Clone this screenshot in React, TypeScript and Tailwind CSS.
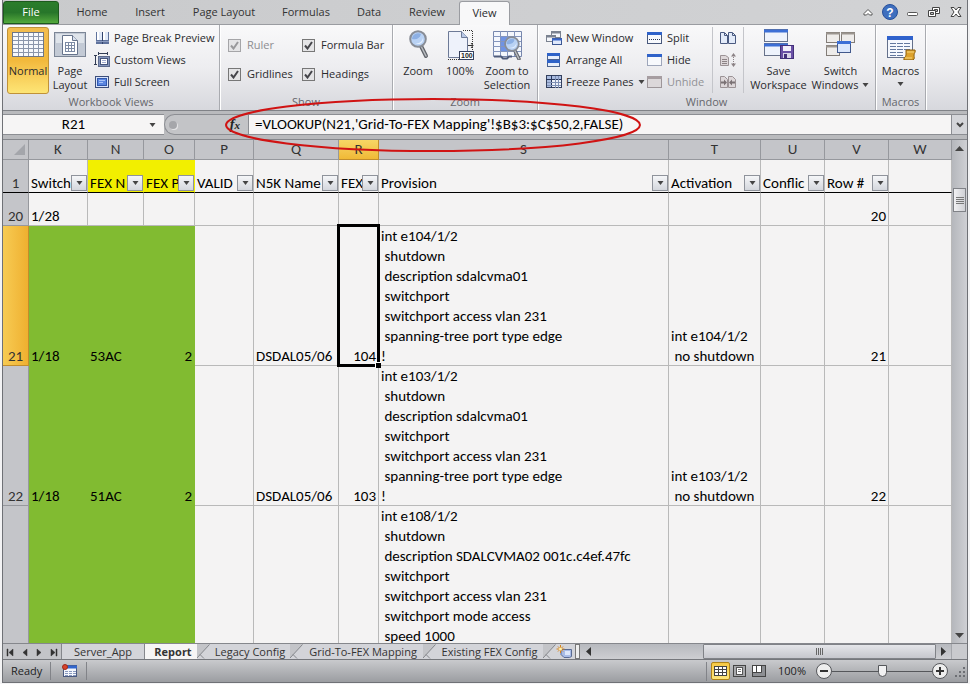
import React from 'react';
import { useState } from 'react';

const ribbonTabs = [
  { name: 'Home', width: 'w-[58px]' },
  { name: 'Insert', width: 'w-[58px]' },
  { name: 'Page Layout', width: 'w-[90px]' },
  { name: 'Formulas', width: 'w-[74px]' },
  { name: 'Data', width: 'w-[52px]' },
  { name: 'Review', width: 'w-[64px]' },
];

const columns = [
  { name: 'K', width: 'w-[59px]', title: 'Switch', filter: true },
  { name: 'N', width: 'w-[56px]', title: 'FEX N', filter: true },
  { name: 'O', width: 'w-[51px]', title: 'FEX P', filter: true },
  { name: 'P', width: 'w-[59px]', title: 'VALID', filter: true },
  { name: 'Q', width: 'w-[85px]', title: 'N5K Name', filter: true },
  { name: 'R', width: 'w-[40px]', title: 'FEX', filter: true },
  { name: 'S', width: 'w-[290px]', title: 'Provision', filter: true },
  { name: 'T', width: 'w-[92px]', title: 'Activation', filter: true },
  { name: 'U', width: 'w-[64px]', title: 'Conflic', filter: true },
  { name: 'V', width: 'w-[64px]', title: 'Row #', filter: true },
  { name: 'W', width: '', title: '', filter: false },
];

const rows: { id: number; height: string; cells: Record<string, string> }[] = [
  { id: 20, height: 'h-[33px]', cells: { K: '1/28', V: '20' } },
  {
    id: 21,
    height: 'h-[140px]',
    cells: {
      K: '1/18', N: '53AC', O: '2', Q: 'DSDAL05/06', R: '104', V: '21',
      S: 'int e104/1/2\n shutdown\n description sdalcvma01\n switchport\n switchport access vlan 231\n spanning-tree port type edge\n!',
      T: 'int e104/1/2\n no shutdown',
    },
  },
  {
    id: 22,
    height: 'h-[140px]',
    cells: {
      K: '1/18', N: '51AC', O: '2', Q: 'DSDAL05/06', R: '103', V: '22',
      S: 'int e103/1/2\n shutdown\n description sdalcvma01\n switchport\n switchport access vlan 231\n spanning-tree port type edge\n!',
      T: 'int e103/1/2\n no shutdown',
    },
  },
  {
    id: 23,
    height: 'h-[180px]',
    cells: {
      S: 'int e108/1/2\n shutdown\n description SDALCVMA02 001c.c4ef.47fc\n switchport\n switchport access vlan 231\n switchport mode access\n speed 1000',
    },
  },
];

function Caret() {
  return (
    <svg width="7" height="4" viewBox="0 0 7 4" className="shrink-0">
      <path d="M0.5 0h6L3.5 4z" fill="#444" />
    </svg>
  );
}

function NormalIcon() {
  return (
    <svg width="32" height="32" viewBox="0 0 32 32">
      <rect x="0.5" y="4.5" width="31" height="24" fill="#f7f9fc" stroke="#6d7687" />
      <path d="M1 8.500h30M1 12.500h30M1 16.500h30M1 20.500h30M1 24.500h30M6.500 5v23M11.500 5v23M16.500 5v23M21.500 5v23M26.500 5v23" stroke="#8b96ab" />
    </svg>
  );
}

function PageLayoutIcon() {
  return (
    <svg width="32" height="32" viewBox="0 0 32 32">
      <rect x="0.5" y="4.5" width="31" height="24" fill="#c3cad5" stroke="#7c8696" />
      <path d="M2 6h28v9H2z" fill="#dfe4ea" />
      <path d="M8.500 7.500h10l5 5v14h-15z" fill="#fff" stroke="#67748c" />
      <path d="M18.500 7.500v5h5" fill="#dbe2ee" stroke="#67748c" />
      <path d="M11 14.500h10M11 17.500h10M11 20.500h10M11 23.500h10M11.500 14v10M14.500 14v10M17.500 14v10M20.500 14v10" stroke="#7d8ba4" />
    </svg>
  );
}

function PageBreakIcon() {
  return (
    <svg width="16" height="16" viewBox="0 0 16 16">
      <path d="M2 2h13v12H2z" fill="#5f729c" />
      <path d="M3 2h5v8H3zM9 2h5v8H9z" fill="#dfe8f8" />
      <path d="M3 2h2v8H3zM9 2h2v8H9z" fill="#fff" />
      <path d="M8.500 2v12" stroke="#32436d" />
      <path d="M2 11h13v1H2z" fill="#8c9cc0" />
    </svg>
  );
}

function CustomViewsIcon() {
  return (
    <svg width="16" height="16" viewBox="0 0 16 16">
      <path d="M0 3.500h3M1.500 3.500v9M0 12.500h3M4 1.500h10M4.500 0v3M13.500 0v3" stroke="#333d55" fill="none" />
      <rect x="4.500" y="4.500" width="11" height="10" fill="#8494bb" stroke="#5c6a8c" />
      <rect x="6.500" y="6.500" width="7" height="6" fill="#fff" stroke="#45547a" />
      <path d="M8 8.500h4M8 10.500h4" stroke="#a3add0" />
    </svg>
  );
}

function FullScreenIcon() {
  return (
    <svg width="16" height="16" viewBox="0 0 16 16">
      <rect x="1.500" y="2.500" width="13" height="11" fill="#d9e4fb" stroke="#3d4e7a" />
      <rect x="3.500" y="4.500" width="9" height="7" fill="#5b86e0" stroke="#3158ae" />
      <path d="M5 6.500h6M5 8.500h4" stroke="#a9c3f8" />
    </svg>
  );
}

function Lens({ x, y }: { x: number; y: number }) {
  return (
    <g transform={`translate(${x} ${y})`}>
      <path d="M12 16l5 10" stroke="#63666c" strokeWidth="4" strokeLinecap="round" />
      <path d="M12 16l5 10" stroke="#b9bcc2" strokeWidth="1.500" strokeLinecap="round" />
      <circle cx="9" cy="9" r="7.800" fill="#b9d2f4" stroke="#888d96" strokeWidth="2" />
      <path d="M3 9a6 6 0 0 1 9-5c-1 4-4 6-9 5z" fill="#8db0e4" />
      <path d="M6 13c4 1 7-1 8-5 1 4-3 8-8 5z" fill="#e5f0ff" />
    </g>
  );
}

function ZoomIcon() {
  return (
    <svg width="32" height="32" viewBox="0 0 32 32">
      <Lens x={7} y={2} />
    </svg>
  );
}

function HundredIcon() {
  return (
    <svg width="32" height="32" viewBox="0 0 32 32">
      <path d="M4.500 3.500h13l6 6v20h-19z" fill="#eef2fb" stroke="#6d7a97" />
      <path d="M17.500 3.500v6h6" fill="#b9c8e6" stroke="#6d7a97" />
      <path d="M19 2.500h9.500V22M4 31.500h12" stroke="#333" strokeDasharray="1 1" fill="none" />
      <path d="M24 17.500h5M27 15l2 2.500-2 2.500" stroke="#333" fill="none" />
      <rect x="15.500" y="23.500" width="14" height="8" fill="#fff" stroke="#36415e" />
      <text x="17" y="30" fontSize="7" fontWeight="bold" fontFamily="Liberation Sans, sans-serif" fill="#222">100</text>
    </svg>
  );
}

function ZoomSelectionIcon() {
  return (
    <svg width="32" height="32" viewBox="0 0 32 32">
      <path d="M2.500 3.500h28v25h-28z" fill="#f4f7fd" stroke="#7787ad" />
      <path d="M9 8h14v15H9z" fill="#6f93e4" />
      <path d="M2 8.500h28M2 13.500h28M2 18.500h28M2 23.500h28M9.500 3v25M16.500 3v25M23.500 3v25" stroke="#8495bd" />
      <path d="M3 28.500h7l2 2h4l2-2h3" stroke="#4e5b7b" fill="none" strokeWidth="2" />
      <g transform="translate(13 8) scale(.88)"><Lens x={0} y={0} /></g>
    </svg>
  );
}

function NewWindowIcon() {
  return (
    <svg width="16" height="16" viewBox="0 0 16 16">
      <rect x="5.500" y="1.500" width="9" height="6" fill="#f4f6fa" stroke="#7b8290" />
      <path d="M5 2.500h10" stroke="#7b8290" strokeWidth="2" />
      <rect x="0.500" y="5.500" width="9" height="6" fill="#f4f6fa" stroke="#7b8290" />
      <path d="M0 6.500h10" stroke="#7b8290" strokeWidth="2" />
      <rect x="6.500" y="8.500" width="9" height="6" fill="#dfe9fc" stroke="#3c5792" />
      <path d="M6 9.500h10" stroke="#3a66c9" strokeWidth="2" />
    </svg>
  );
}

function ArrangeIcon() {
  return (
    <svg width="16" height="16" viewBox="0 0 16 16">
      <rect x="1.500" y="1.500" width="12" height="6" fill="#e6eefc" stroke="#4b628f" />
      <path d="M1 2.500h13" stroke="#2e62c8" strokeWidth="3" />
      <rect x="1.500" y="8.500" width="12" height="6" fill="#e6eefc" stroke="#4b628f" />
      <path d="M1 9.500h13" stroke="#2e62c8" strokeWidth="3" />
    </svg>
  );
}

function FreezeIcon() {
  return (
    <svg width="16" height="16" viewBox="0 0 16 16">
      <rect x="0.500" y="1.500" width="15" height="12" fill="#eef2fa" stroke="#34415f" />
      <path d="M1 2h14v3H1zM1 2h4v11H1z" fill="#a9bbdf" />
      <path d="M0 5.500h16M5.500 1v13" stroke="#28365a" />
      <path d="M1 8.500h14M1 11.500h14M9.500 2v12M12.500 2v12" stroke="#7f90b5" />
    </svg>
  );
}

function SplitIcon({ mode }: { mode: 'split' | 'hide' | 'unhide' }) {
  const gray = mode === 'unhide';
  return (
    <svg width="16" height="16" viewBox="0 0 16 16">
      <rect
        x="0.500"
        y="2.500"
        width="14"
        height="11"
        fill={gray ? '#dcd8da' : '#f7f9fd'}
        stroke={gray ? '#9d9699' : '#48587c'}
        strokeDasharray={mode === 'hide' ? '1 1' : undefined}
      />
      <path d="M0 3.500h15" stroke={gray ? '#a69da1' : '#2f62c9'} strokeWidth="3" />
      {mode === 'split' && <path d="M2 9.500h12" stroke="#2b3755" strokeDasharray="1 1" />}
    </svg>
  );
}

function SideBySideIcon() {
  return (
    <svg width="16" height="16" viewBox="0 0 16 16">
      <path d="M0.500 2.500h4l3 3v8h-7z" fill="#e3ebf9" stroke="#4a5a80" />
      <path d="M8.500 2.500h4l3 3v8h-7z" fill="#e3ebf9" stroke="#4a5a80" />
      <path d="M4.500 3v2.500h3M12.500 3v2.500h3" stroke="#4a5a80" fill="none" />
    </svg>
  );
}

function SyncScrollIcon() {
  return (
    <svg width="16" height="16" viewBox="0 0 16 16">
      <path d="M0.500 3.500h5l3 2v8h-8z" fill="#ddd7d9" stroke="#9b9295" />
      <path d="M2 7.500h5M2 9.500h5M2 11.500h5" stroke="#8b8285" />
      <path d="M13.500 3v10" stroke="#8b8285" strokeDasharray="1 1" />
      <path d="M11 4.500L13.500 1 16 4.500zM11 11.500l2.500 3.500 2.500-3.500z" fill="#8b8285" />
    </svg>
  );
}

function ResetIcon() {
  return (
    <svg width="16" height="16" viewBox="0 0 16 16">
      <path d="M0.500 2.500h4l3 3v8h-7zM8.500 2.500h4l3 3v8h-7z" fill="#ddd7d9" stroke="#9b9295" />
      <path d="M1 8.500h3M15 8.500h-3" stroke="#7b7275" strokeWidth="2" />
      <path d="M4 5.500l3 3-3 3zM12 5.500l-3 3 3 3z" fill="#7b7275" />
    </svg>
  );
}

function SaveWorkspaceIcon() {
  return (
    <svg width="32" height="32" viewBox="0 0 32 32">
      <rect x="1.500" y="1.500" width="23" height="12" fill="#eef3fc" stroke="#67728a" />
      <path d="M1 3h24" stroke="#3c6fd6" strokeWidth="3" />
      <rect x="1.500" y="15.500" width="23" height="12" fill="#eef3fc" stroke="#67728a" />
      <path d="M1 17h24" stroke="#3c6fd6" strokeWidth="3" />
      <rect x="17.500" y="17.500" width="13" height="13" fill="#6a50a6" stroke="#43307a" />
      <path d="M20 18h8v5h-8z" fill="#f3effb" />
      <path d="M20 25h8v5h-8z" fill="#d9d3e8" />
      <path d="M21 26h3v4h-3z" fill="#43307a" />
    </svg>
  );
}

function SwitchWindowsIcon() {
  return (
    <svg width="32" height="32" viewBox="0 0 32 32">
      <g fill="#eeecea" stroke="#827c77">
        <rect x="1.500" y="4.500" width="13" height="10" />
        <rect x="16.500" y="4.500" width="13" height="10" />
        <rect x="1.500" y="17.500" width="13" height="10" />
      </g>
      <path d="M1 5.500h14M16 5.500h14M1 18.500h14" stroke="#9b958f" strokeWidth="2" />
      <rect x="12.500" y="13.500" width="13" height="11" fill="#dbe7fc" stroke="#42598c" />
      <path d="M12 14.500h14" stroke="#3c6fd6" strokeWidth="3" />
    </svg>
  );
}

function MacrosIcon() {
  return (
    <svg width="32" height="32" viewBox="0 0 32 32">
      <rect x="2.500" y="8.500" width="25" height="21" fill="#f5f8fe" stroke="#64708a" />
      <path d="M2 10h26" stroke="#2f62cc" strokeWidth="4" />
      <path d="M5 15.500h20M5 18.500h20M5 21.500h20M5 24.500h14M5 27.500h14" stroke="#63789f" strokeDasharray="6 1" />
      <path d="M21 22h9c1 2-1 3-1 5s1 4-1 5h-9c-1-2 2-3 2-5z" fill="#dca12c" stroke="#8d6110" />
      <path d="M22 24h7M20 30h7" stroke="#f6d67e" />
    </svg>
  );
}

function SmallButton({ icon, label, caret, disabled }: { icon: React.ReactNode; label: string; caret?: boolean; disabled?: boolean }) {
  return (
    <button disabled={disabled} className="flex h-[22px] items-center gap-1 whitespace-nowrap disabled:text-[#929296]">
      {icon}
      <span>{label}</span>
      {caret && <Caret />}
    </button>
  );
}

function BigButton({ icon, lines, width, active, caret }: { icon: React.ReactNode; lines: string[]; width: string; active?: boolean; caret?: boolean }) {
  return (
    <button
      className={`flex h-[67px] shrink-0 flex-col items-center whitespace-nowrap rounded-[3px] border leading-[14px] ${width} ${
        active ? 'border-[#c09238] bg-linear-to-b from-[#f3bd4f] via-[#f2b93c] to-[#fde575]' : 'border-transparent'
      }`}
    >
      <span className="mb-1 block">{icon}</span>
      {lines.map((line, i) => (
        <span key={line} className="flex h-[14px] items-center gap-1">
          {line}
          {caret && i === 1 && <Caret />}
        </span>
      ))}
      {caret && lines.length === 1 && <span className="pt-1"><Caret /></span>}
    </button>
  );
}

function Group({ label, width, children }: { label: string; width: string; children: React.ReactNode }) {
  return (
    <section className={`flex shrink-0 flex-col border-r border-[#a9abb0] shadow-[1px_0_0_#fff] ${width}`}>
      <div className="flex flex-1 pt-[2px]">{children}</div>
      <h2 className="h-4 text-center leading-4 text-[#66676c]">{label}</h2>
    </section>
  );
}

function Check({ label, disabled }: { label: string; disabled?: boolean }) {
  return (
    <label className={`flex h-[29px] items-center gap-[6px] whitespace-nowrap ${disabled ? 'text-[#8d8d91]' : ''}`}>
      <span className="grid size-[13px] place-items-center">
        <input
          type="checkbox"
          defaultChecked
          disabled={disabled}
          className="peer col-start-1 row-start-1 size-[13px] appearance-none border border-[#777] bg-[#e4e4e6] disabled:border-[#a5a5a8]"
        />
        <svg width="9" height="9" viewBox="0 0 9 9" className="pointer-events-none invisible col-start-1 row-start-1 peer-checked:visible">
          <path d="M1 4.500l2.500 3L8 1" fill="none" stroke={disabled ? '#98989b' : '#45454a'} strokeWidth="2" />
        </svg>
      </span>
      {label}
    </label>
  );
}

function TitleTabs() {
  return (
    <nav className="flex h-6 shrink-0 items-stretch bg-linear-to-r from-[#c9cacc] to-[#d2d3d5]">
      <button className="mt-px w-14 rounded-t-[3px] border border-[#1d5a1d] bg-linear-to-b from-[#2b7d2b] via-[#27762a] to-[#53a93c] text-white">File</button>
      <div className="flex pt-px pl-1">
        {ribbonTabs.map((tab) => (
          <button key={tab.name} className={`whitespace-nowrap text-[#333] ${tab.width}`}>{tab.name}</button>
        ))}
      </div>
      <button className="z-10 mt-px -mb-px w-[51px] rounded-t-[3px] border border-b-0 border-[#9a9ca1] bg-[#f8f8f9]">View</button>
      <div className="ml-auto flex items-center gap-[6px] pr-[3px]">
        <button aria-label="Minimize the Ribbon">
          <svg width="16" height="16" viewBox="0 0 16 16"><path d="M4 9.500L8 5.500l4 4v1.500H9.500L8 9.500 6.500 11H4z" fill="#fff" stroke="#555" /></svg>
        </button>
        <button aria-label="Help">
          <svg width="16" height="16" viewBox="0 0 16 16">
            <circle cx="8" cy="8" r="7.500" fill="#3f6fbe" stroke="#27509b" />
            <text x="8" y="12.500" textAnchor="middle" fontSize="12" fontWeight="bold" fontFamily="Liberation Sans, sans-serif" fill="#fff">?</text>
          </svg>
        </button>
        <button aria-label="Minimize">
          <svg width="16" height="16" viewBox="0 0 16 16"><rect x="3.500" y="8.500" width="10" height="3" rx="1" fill="#fff" stroke="#555" /></svg>
        </button>
        <button aria-label="Restore">
          <svg width="16" height="16" viewBox="0 0 16 16">
            <path d="M6.500 3.500h7v6h-7z" fill="#fff" stroke="#444" />
            <path d="M8.500 5.500h3v2h-3z" fill="#bbb" stroke="#444" />
            <path d="M2.500 6.500h7v6h-7z" fill="#fff" stroke="#444" />
            <path d="M4.500 8.500h3v2h-3z" fill="#bbb" stroke="#444" />
          </svg>
        </button>
        <button aria-label="Close">
          <svg width="16" height="16" viewBox="0 0 16 16">
            <path d="M3 3.500h3l2 2.500 2-2.500h3L10 8l3 4.500h-3L8 10l-2 2.500H3L6 8z" fill="#fff" stroke="#444" />
          </svg>
        </button>
      </div>
    </nav>
  );
}

function Ribbon() {
  return (
    <div className="flex h-[87px] shrink-0 border-y border-[#9a9ca1] border-b-[#808287] bg-linear-to-b from-[#f9f9fa] via-[#ededf0] to-[#d7d8dd]">
      <Group label="Workbook Views" width="w-[217px]">
        <div className="flex pl-1">
          <BigButton icon={<NormalIcon />} lines={['Normal']} width="w-[42px]" active />
          <BigButton icon={<PageLayoutIcon />} lines={['Page', 'Layout']} width="w-[42px]" />
          <div className="flex flex-col pl-[3px]">
            <SmallButton icon={<PageBreakIcon />} label="Page Break Preview" />
            <SmallButton icon={<CustomViewsIcon />} label="Custom Views" />
            <SmallButton icon={<FullScreenIcon />} label="Full Screen" />
          </div>
        </div>
      </Group>
      <Group label="Show" width="w-[173px]">
        <div className="grid grid-cols-[74px_1fr] content-start pt-1 pl-2">
          <Check label="Ruler" disabled />
          <Check label="Formula Bar" />
          <Check label="Gridlines" />
          <Check label="Headings" />
        </div>
      </Group>
      <Group label="Zoom" width="w-[145px]">
        <div className="flex pl-1">
          <BigButton icon={<ZoomIcon />} lines={['Zoom']} width="w-[42px]" />
          <BigButton icon={<HundredIcon />} lines={['100%']} width="w-[42px]" />
          <BigButton icon={<ZoomSelectionIcon />} lines={['Zoom to', 'Selection']} width="w-[52px]" />
        </div>
      </Group>
      <Group label="Window" width="w-[338px]">
        <div className="flex pl-2">
          <div className="flex w-[101px] flex-col">
            <SmallButton icon={<NewWindowIcon />} label="New Window" />
            <SmallButton icon={<ArrangeIcon />} label="Arrange All" />
            <SmallButton icon={<FreezeIcon />} label="Freeze Panes" caret />
          </div>
          <div className="flex w-[65px] flex-col">
            <SmallButton icon={<SplitIcon mode="split" />} label="Split" />
            <SmallButton icon={<SplitIcon mode="hide" />} label="Hide" />
            <SmallButton icon={<SplitIcon mode="unhide" />} label="Unhide" disabled />
          </div>
          <div className="flex h-[66px] w-8 flex-col items-center border-x border-[#c4c5ca]">
            <button aria-label="View Side by Side" className="h-[22px]"><SideBySideIcon /></button>
            <button aria-label="Synchronous Scrolling" className="h-[22px]" disabled><SyncScrollIcon /></button>
            <button aria-label="Reset Window Position" className="h-[22px]" disabled><ResetIcon /></button>
          </div>
          <div className="flex pl-1">
            <BigButton icon={<SaveWorkspaceIcon />} lines={['Save', 'Workspace']} width="w-[61px]" />
            <BigButton icon={<SwitchWindowsIcon />} lines={['Switch', 'Windows']} width="w-[63px]" caret />
          </div>
        </div>
      </Group>
      <Group label="Macros" width="w-[50px]">
        <BigButton icon={<MacrosIcon />} lines={['Macros']} width="w-full" caret />
      </Group>
    </div>
  );
}

function FormulaBar() {
  return (
    <div className="relative flex h-[29px] shrink-0 items-stretch border-b border-[#85878c] bg-[#b9babd] pt-[3px] pb-1">
      <input aria-label="Name Box" defaultValue="R21" className="w-[141px] border-y border-[#8c8e93] bg-[#f6f5f5] text-center font-['Calibri','Carlito','Lato',sans-serif] text-[15px] text-black" />
      <button aria-label="Name list" className="grid w-5 place-items-center border-y border-[#8c8e93] bg-[#f6f5f5] pr-1"><Caret /></button>
      <div className="flex w-[84px] items-center justify-between rounded-l-full border border-r-0 border-[#8c8e93] bg-[#c3c4c7] pr-2 pl-1">
        <span className="size-2 rounded-full bg-[#a5a6aa] shadow-[1px_1px_0_#e4e4e6]" />
        <button aria-label="Insert Function" className="font-['Liberation_Serif',serif] text-sm font-bold italic leading-4 text-[#222]">
          f<span className="text-[11px]">x</span>
        </button>
      </div>
      <input
        aria-label="Formula"
        defaultValue="=VLOOKUP(N21,'Grid-To-FEX Mapping'!$B$3:$C$50,2,FALSE)"
        className="min-w-0 flex-1 border border-[#8c8e93] bg-[#f6f5f5] pl-[6px] font-['Calibri','Carlito','Lato',sans-serif] text-[15px] text-black"
      />
      <button aria-label="Expand Formula Bar" className="grid w-[15px] place-items-center border-y border-[#8c8e93] bg-[#d4d5d9]">
        <svg width="8" height="6" viewBox="0 0 8 6"><path d="M1 1l3 3 3-3" fill="none" stroke="#444" strokeWidth="2" /></svg>
      </button>
      <svg width="418" height="56" viewBox="0 0 418 56" className="pointer-events-none absolute -top-[14px] left-[221px] z-20">
        <ellipse cx="209" cy="28" rx="207" ry="26" fill="none" stroke="#d01313" strokeWidth="2" />
      </svg>
    </div>
  );
}

function Sheet() {
  return (
    <div className="flex min-h-0 flex-1">
      <div className="min-w-0 flex-1 overflow-hidden bg-[#f4f3f3]">
        <table className="w-full table-fixed border-separate border-spacing-0 font-['Calibri','Carlito','Lato',sans-serif] text-[15px] leading-5 text-black">
          <colgroup>
            <col className="w-[26px]" />
            {columns.map((col) => <col key={col.name} className={col.width} />)}
          </colgroup>
          <thead>
            <tr className="h-5 bg-[#c4c5c9] text-[#333]">
              <th className="border-r border-b border-[#96989d] p-0">
                <svg width="12" height="12" viewBox="0 0 12 12" className="ml-[11px]"><path d="M11 0v11H0z" fill="#a4a6ab" /></svg>
              </th>
              {columns.map((col) => (
                <th
                  key={col.name}
                  scope="col"
                  className={`border-r border-b p-0 font-normal leading-[19px] ${
                    col.name === 'R' ? 'border-[#c28d2c] bg-linear-to-b from-[#f7d665] to-[#f0b935]' : 'border-[#96989d]'
                  }`}
                >
                  {col.name}
                </th>
              ))}
            </tr>
          </thead>
          <tbody>
            <tr className="h-[33px] align-bottom">
              <th scope="row" className="border-r border-b border-[#96989d] border-b-black bg-[#c4c5c9] p-0 font-normal leading-[18px] text-[#333]">1</th>
              {columns.map((col) => (
                <td
                  key={col.name}
                  className={`border-r border-b border-[#b9b9b9] border-b-black p-0 ${
                    col.name === 'N' || col.name === 'O' ? 'border-r-[#f2ef00] bg-[#f2ef00]' : ''
                  }`}
                >
                  {col.filter && (
                    <div className="flex items-end pl-[2px]">
                      <span className="min-w-0 flex-1 whitespace-nowrap leading-[18px]">{col.title}</span>
                      <button aria-label={`Filter ${col.title}`} className="relative mb-px grid size-4 shrink-0 place-items-center border border-[#8f939b] bg-linear-to-b from-[#f5f6f8] to-[#d4d7dd]">
                        <Caret />
                      </button>
                    </div>
                  )}
                </td>
              ))}
            </tr>
            {rows.map((row) => (
              <tr key={row.id} className={`align-bottom ${row.height}`}>
                <th
                  scope="row"
                  className={`border-r border-b p-0 font-normal leading-[18px] ${
                    row.id === 21
                      ? 'border-[#c28d2c] bg-linear-to-r from-[#f7cb52] to-[#efb02f] text-[#333]'
                      : 'border-[#96989d] bg-[#c4c5c9] text-[#333]'
                  }`}
                >
                  {row.id === 23 ? '' : row.id}
                </th>
                {columns.map((col) => {
                  const green = row.id > 20 && ['K', 'N', 'O'].includes(col.name);
                  const selected = row.id === 21 && col.name === 'R';
                  const right = ['O', 'R', 'V'].includes(col.name);
                  return (
                    <td
                      key={col.name}
                      className={`relative border-r border-b p-0 px-[2px] ${row.id === 23 ? 'align-top' : ''} ${right ? 'text-right' : ''} ${
                        green ? 'border-[#81bb31] bg-[#81bb31]' : 'border-[#b9b9b9]'
                      }`}
                    >
                      <div className="-mb-px whitespace-pre">{row.cells[col.name]}</div>
                      {selected && (
                        <div className="pointer-events-none absolute -inset-[2px] z-10 border-[3px] border-black">
                          <span className="absolute -right-1 -bottom-1 size-[6px] border-t border-l border-white bg-black" />
                        </div>
                      )}
                    </td>
                  );
                })}
              </tr>
            ))}
          </tbody>
        </table>
      </div>
      <div className="flex w-[15px] flex-col items-center bg-linear-to-r from-[#b5b7bc] to-[#cfd0d4]">
        <button aria-label="Scroll up" className="grid h-4 w-full place-items-center">
          <svg width="9" height="5" viewBox="0 0 9 5"><path d="M0 5h9L4.500 0z" fill="#444" /></svg>
        </button>
        <div className="mt-8 grid h-6 w-[13px] content-center justify-items-center gap-px border border-[#808287] bg-linear-to-r from-[#f1f1f3] to-[#cfd0d5]">
          <span className="h-px w-2 bg-[#777]" />
          <span className="h-px w-2 bg-[#777]" />
          <span className="h-px w-2 bg-[#777]" />
          <span className="h-px w-2 bg-[#777]" />
        </div>
        <button aria-label="Scroll down" className="mt-auto grid h-4 w-full place-items-center">
          <svg width="9" height="5" viewBox="0 0 9 5"><path d="M0 0h9L4.500 5z" fill="#444" /></svg>
        </button>
      </div>
    </div>
  );
}

function Slant() {
  return (
    <svg width="13" height="15" viewBox="0 0 13 15" className="shrink-0">
      <path d="M0 14L13 0v15H0z" fill="#d3d4d9" />
      <path d="M0 14L12.500 0.500M3 10.500l4 4" fill="none" stroke="#85878c" />
    </svg>
  );
}

function SheetTabs() {
  const navIcons = [
    { label: 'First sheet', d: 'M2 2h1v7H2zM8 2v7L4 5.500z' },
    { label: 'Previous sheet', d: 'M7 2v7L3 5.500z' },
    { label: 'Next sheet', d: 'M3 2v7l4-3.500z' },
    { label: 'Last sheet', d: 'M7 2h1v7H7zM2 2v7l4-3.500z' },
  ];
  return (
    <div className="flex h-4 shrink-0 items-stretch border-t border-[#85878c] bg-[#c3c4c8] text-[#333]">
      <div className="flex w-[59px] items-center justify-around border-r border-[#85878c]">
        {navIcons.map((nav) => (
          <button key={nav.label} aria-label={nav.label}>
            <svg width="10" height="10" viewBox="0 0 10 10"><path d={nav.d} fill="#333" stroke="#333" strokeWidth="0.500" /></svg>
          </button>
        ))}
      </div>
      <button className="w-[82px] bg-[#d3d4d9] leading-[15px]">Server_App</button>
      <button className="w-[53px] border-l border-[#85878c] bg-[#f6f5f5] pl-1 leading-[15px] font-bold">Report</button>
      <Slant />
      <button className="w-[80px] whitespace-nowrap bg-[#d3d4d9] leading-[15px]">Legacy Config</button>
      <Slant />
      <button className="w-[120px] whitespace-nowrap bg-[#d3d4d9] leading-[15px]">Grid-To-FEX Mapping</button>
      <Slant />
      <button className="w-[107px] whitespace-nowrap bg-[#d3d4d9] leading-[15px]">Existing FEX Config</button>
      <Slant />
      <button aria-label="Insert Worksheet" className="w-[19px] bg-[#d3d4d9]">
        <svg width="17" height="14" viewBox="0 0 17 14">
          <path d="M5 4.500h10.500v7l-2 1H8l-3-3z" fill="#a9bce6" stroke="#5a6b93" />
          <path d="M9 6h5v4H9z" fill="#dde7fa" />
          <path d="M4.500 0v8M0.500 4h8M2 1.500l5 5M7 1.500l-5 5" stroke="#d8841c" />
          <circle cx="4.500" cy="4" r="1.500" fill="#fff2a8" />
        </svg>
      </button>
      <span className="w-[5px] border border-[#777] bg-[#eee]" />
      <div className="flex min-w-0 flex-1 items-stretch bg-linear-to-b from-[#b7b9be] to-[#cdced2]">
        <button aria-label="Scroll left" className="grid w-4 place-items-center">
          <svg width="5" height="9" viewBox="0 0 5 9"><path d="M5 0v9L0 4.500z" fill="#333" /></svg>
        </button>
        <div className="ml-auto flex w-[233px] items-center justify-center gap-px rounded-[1px] border border-[#808287] bg-linear-to-b from-[#e4e5e9] to-[#c6c7cd]">
          <span className="h-[7px] w-px bg-[#666]" />
          <span className="h-[7px] w-px bg-[#666]" />
          <span className="h-[7px] w-px bg-[#666]" />
          <span className="h-[7px] w-px bg-[#666]" />
        </div>
        <button aria-label="Scroll right" className="grid w-4 place-items-center border-r border-[#a5a7ac]">
          <svg width="5" height="9" viewBox="0 0 5 9"><path d="M0 0v9l5-4.500z" fill="#333" /></svg>
        </button>
      </div>
      <span className="w-[15px] bg-[#c9cace]" />
    </div>
  );
}

function StatusBar() {
  const [zoom, setZoom] = useState(50);

  return (
    <footer className="flex h-[23px] shrink-0 items-center border-t border-[#75777c] bg-linear-to-b from-[#c9cacd] to-[#9b9da1] text-[#222]">
      <span className="w-12 border-r border-[#818388] pl-2 leading-[18px]">Ready</span>
      <button aria-label="Record Macro" className="grid h-[18px] w-9 place-items-center border-r border-[#818388]">
        <svg width="16" height="16" viewBox="0 0 16 16">
          <rect x="2.500" y="2.500" width="13" height="11" fill="#f4f7fd" stroke="#4a5a80" />
          <path d="M2 4h14" stroke="#3366cc" strokeWidth="3" />
          <path d="M4 8.500h11M4 10.500h11M4 12.500h11" stroke="#8798be" strokeDasharray="3 1" />
          <circle cx="4" cy="4" r="2.500" fill="#d9432b" stroke="#a02a18" />
        </svg>
      </button>
      <div className="ml-auto flex items-center">
        <div className="flex h-[19px] items-center border-l border-[#818388] pl-1">
          <button aria-label="Normal" className="grid h-[18px] w-[19px] place-items-center rounded-[2px] border border-[#b08418] bg-linear-to-b from-[#f6c843] to-[#fde67c]">
            <svg width="13" height="11" viewBox="0 0 13 11">
              <rect x="0.500" y="0.500" width="12" height="9" fill="#fff" stroke="#444" />
              <path d="M0 3.500h13M0 6.500h13M4.500 0v10M8.500 0v10" stroke="#444" />
            </svg>
          </button>
          <button aria-label="Page Layout" className="grid w-[19px] place-items-center">
            <svg width="13" height="12" viewBox="0 0 13 12">
              <rect x="0.500" y="0.500" width="12" height="11" fill="#a8a9ac" stroke="#444" />
              <rect x="3.500" y="2.500" width="6" height="7" fill="#fff" stroke="#555" />
              <path d="M5 4.500h3M5 6.500h3" stroke="#777" />
            </svg>
          </button>
          <button aria-label="Page Break Preview" className="grid w-[19px] place-items-center">
            <svg width="14" height="12" viewBox="0 0 14 12">
              <rect x="0.500" y="0.500" width="13" height="11" fill="#8d8f93" stroke="#444" />
              <path d="M1 1h3v6H1zM5 1h4v6H5z" fill="#fff" />
              <path d="M4.500 0v7.500M9.500 0v7.500H1" stroke="#444" fill="none" />
            </svg>
          </button>
        </div>
        <button className="w-12 text-center">100%</button>
        <button aria-label="Zoom Out">
          <svg width="16" height="16" viewBox="0 0 16 16">
            <circle cx="8" cy="8" r="7.500" fill="#eee" stroke="#55575b" />
            <path d="M4 8h8" stroke="#333" strokeWidth="2" />
          </svg>
        </button>
        <input
          type="range"
          aria-label="Zoom"
          value={zoom}
          onChange={(e) => setZoom(Number(e.target.value))}
          className="h-4 w-[100px] appearance-none bg-transparent [&::-webkit-slider-runnable-track]:h-px [&::-webkit-slider-runnable-track]:bg-[#55575b] [&::-webkit-slider-thumb]:-mt-[6px] [&::-webkit-slider-thumb]:h-3 [&::-webkit-slider-thumb]:w-[9px] [&::-webkit-slider-thumb]:appearance-none [&::-webkit-slider-thumb]:rounded-b-full [&::-webkit-slider-thumb]:border [&::-webkit-slider-thumb]:border-[#55575b] [&::-webkit-slider-thumb]:bg-[#f1f1f2]"
        />
        <button aria-label="Zoom In">
          <svg width="16" height="16" viewBox="0 0 16 16">
            <circle cx="8" cy="8" r="7.500" fill="#eee" stroke="#55575b" />
            <path d="M4 8h8M8 4v8" stroke="#333" strokeWidth="2" />
          </svg>
        </button>
        <svg width="12" height="12" viewBox="0 0 12 12" className="mt-1 ml-[7px]">
          <path d="M8 0h2v2H8zM4 4h2v2H4zM8 4h2v2H8zM0 8h2v2H0zM4 8h2v2H4zM8 8h2v2H8z" fill="#6d6f74" />
        </svg>
      </div>
    </footer>
  );
}

export default function App() {
  return (
    <div className="h-screen overflow-hidden bg-[#f3f3f4] pr-[2px] pb-px pl-[2px]">
      <main className="flex h-full flex-col border border-t-0 border-[#6f7176] font-['Open_Sans',sans-serif] text-[11px] text-[#2b2b2e]">
        <TitleTabs />
        <Ribbon />
        <FormulaBar />
        <Sheet />
        <SheetTabs />
        <StatusBar />
      </main>
    </div>
  );
}
